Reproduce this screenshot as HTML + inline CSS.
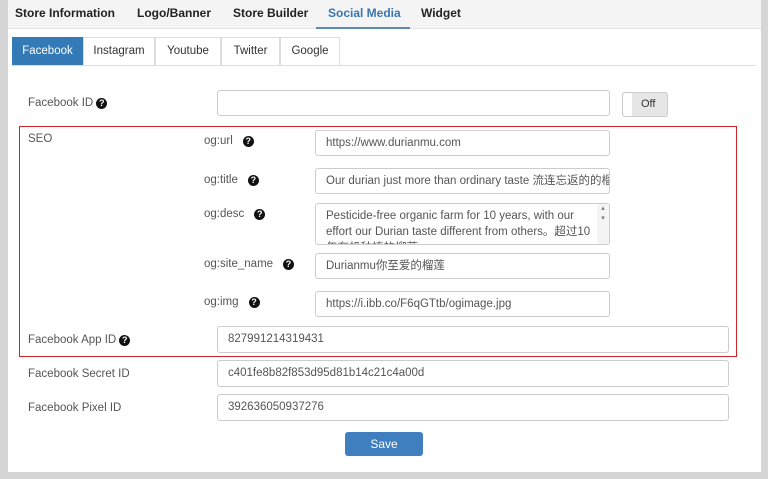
<!DOCTYPE html>
<html><head><meta charset="utf-8"><style>
*{box-sizing:border-box;margin:0;padding:0}
body{width:768px;height:479px;background:#d6d6d6;font-family:"Liberation Sans","Noto Sans CJK SC",sans-serif;position:relative;overflow:hidden;color:#444}
.main{position:absolute;left:8px;top:0;width:753px;height:472px;background:#fff}
.nav{position:absolute;left:8px;top:0;width:753px;height:29px;background:#f4f4f4;border-bottom:1px solid #e2e2e2}
.nav span{position:absolute;top:6px;font-size:12px;font-weight:bold;color:#222}
.ul{position:absolute;left:316px;top:27px;width:94px;height:2px;background:#5b8ab8}
.st{position:absolute;top:37px;height:29px;border:1px solid #ddd;border-bottom:none;font-size:11.5px;color:#333;text-align:center;line-height:27px}
.line{position:absolute;left:12px;top:65px;width:744px;height:1px;background:#ddd}
.lb{position:absolute;font-size:11.5px;color:#555}
.q{display:inline-block;width:11px;height:11px;border-radius:50%;background:#111;color:#fff;font-size:9px;font-weight:bold;text-align:center;line-height:11px;vertical-align:0px;margin-left:3px}
.in{position:absolute;border:1px solid #ccc;border-radius:3px;background:#fff;font-size:11.5px;color:#555;padding-left:10px;line-height:24px;white-space:nowrap;overflow:hidden}
</style></head><body>
<div class="main"></div>
<div class="nav">
<span style="left:7px">Store Information</span>
<span style="left:129px">Logo/Banner</span>
<span style="left:225px">Store Builder</span>
<span style="left:320px;color:#3a76b0">Social Media</span>
<span style="left:413px">Widget</span>
</div>
<div class="ul"></div>
<div class="st" style="left:12px;width:71px;background:#337ab7;color:#fff;border-color:#337ab7">Facebook</div>
<div class="st" style="left:83px;width:72px">Instagram</div>
<div class="st" style="left:155px;width:66px">Youtube</div>
<div class="st" style="left:221px;width:59px">Twitter</div>
<div class="st" style="left:280px;width:60px">Google</div>
<div class="line"></div>

<div class="lb" style="left:28px;top:97px">Facebook ID<span class="q">?</span></div>
<div class="in" style="left:217px;top:90px;width:393px;height:26px"></div>
<div style="position:absolute;left:622px;top:92px;width:46px;height:25px;border:1px solid #ccc;border-radius:3px;background:#e6e6e6"><div style="position:absolute;left:0;top:0;width:9px;height:23px;background:#fff;border-radius:3px 0 0 3px"></div><span style="position:absolute;left:18px;top:5px;font-size:11px;color:#333">Off</span></div>

<div style="position:absolute;left:19px;top:126px;width:718px;height:231px;border:1.5px solid #c9252b"></div>
<div class="lb" style="left:28px;top:133px">SEO</div>

<div class="lb" style="left:204px;top:135px">og:url<span class="q" style="margin-left:10px">?</span></div>
<div class="in" style="left:315px;top:130px;width:295px;height:26px">https://www.durianmu.com</div>
<div class="lb" style="left:204px;top:174px">og:title<span class="q" style="margin-left:10px">?</span></div>
<div class="in" style="left:315px;top:168px;width:295px;height:26px">Our durian just more than ordinary taste 流连忘返的的榴莲</div>
<div class="lb" style="left:204px;top:208px">og:desc<span class="q" style="margin-left:10px">?</span></div>
<div class="in" style="left:315px;top:203px;width:295px;height:42px;line-height:16px;padding-top:4px;white-space:normal;padding-right:16px">Pesticide-free organic farm for 10 years, with our effort our Durian taste different from others。超过10年有机种植的榴莲
<div style="position:absolute;right:0;top:0;width:12px;height:40px;background:#f4f4f4;font-size:7px;color:#777;text-align:center;line-height:10px">▴<br>▾</div></div>
<div class="lb" style="left:204px;top:258px">og:site_name<span class="q" style="margin-left:10px">?</span></div>
<div class="in" style="left:315px;top:253px;width:295px;height:26px">Durianmu你至爱的榴莲</div>
<div class="lb" style="left:204px;top:296px">og:img<span class="q" style="margin-left:10px">?</span></div>
<div class="in" style="left:315px;top:291px;width:295px;height:26px">https://i.ibb.co/F6qGTtb/ogimage.jpg</div>

<div class="lb" style="left:28px;top:334px">Facebook App ID<span class="q">?</span></div>
<div class="in" style="left:217px;top:326px;width:512px;height:27px">827991214319431</div>
<div class="lb" style="left:28px;top:368px">Facebook Secret ID</div>
<div class="in" style="left:217px;top:360px;width:512px;height:27px">c401fe8b82f853d95d81b14c21c4a00d</div>
<div class="lb" style="left:28px;top:402px">Facebook Pixel ID</div>
<div class="in" style="left:217px;top:394px;width:512px;height:27px">392636050937276</div>

<div style="position:absolute;left:345px;top:432px;width:78px;height:24px;background:#3f7fc0;border-radius:3px;color:#fff;font-size:12px;text-align:center;line-height:24px">Save</div>
</body></html>
